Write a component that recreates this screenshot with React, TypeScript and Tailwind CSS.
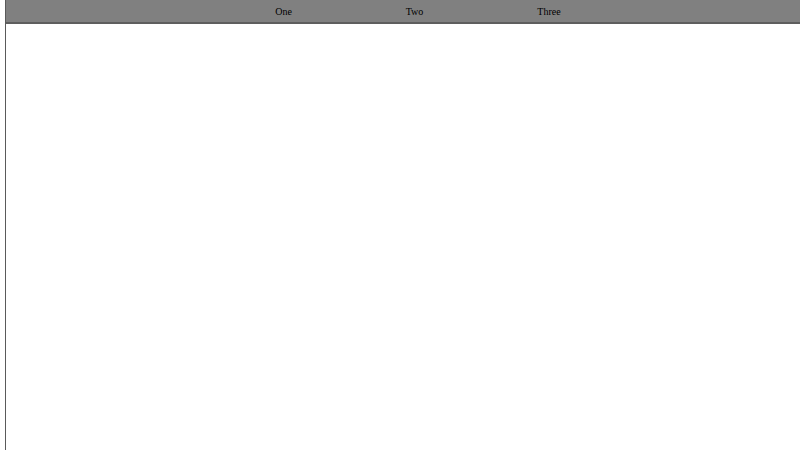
import React from "react";

const tabs = [
  { label: "One", width: "w-[131px]" },
  { label: "Two", width: "w-[131px]" },
  { label: "Three", width: "w-[138px]" },
];

export default function App() {
  return (
    <div className="h-[450px] w-[800px] overflow-hidden bg-white pl-[5px] font-['Liberation_Serif',serif]">
      <div className="flex h-full flex-col border-l border-[#5a5a5a]">
        <div className="flex h-[24px] shrink-0 items-center border-b-2 border-[#5e5e5e] bg-[#808080] pl-[212px] pt-[2px] text-[10px] text-black">
          {tabs.map((tab) => (
            <div key={tab.label} className={`${tab.width} text-center leading-none`}>
              {tab.label}
            </div>
          ))}
        </div>
        <div className="flex-1" />
      </div>
    </div>
  );
}
